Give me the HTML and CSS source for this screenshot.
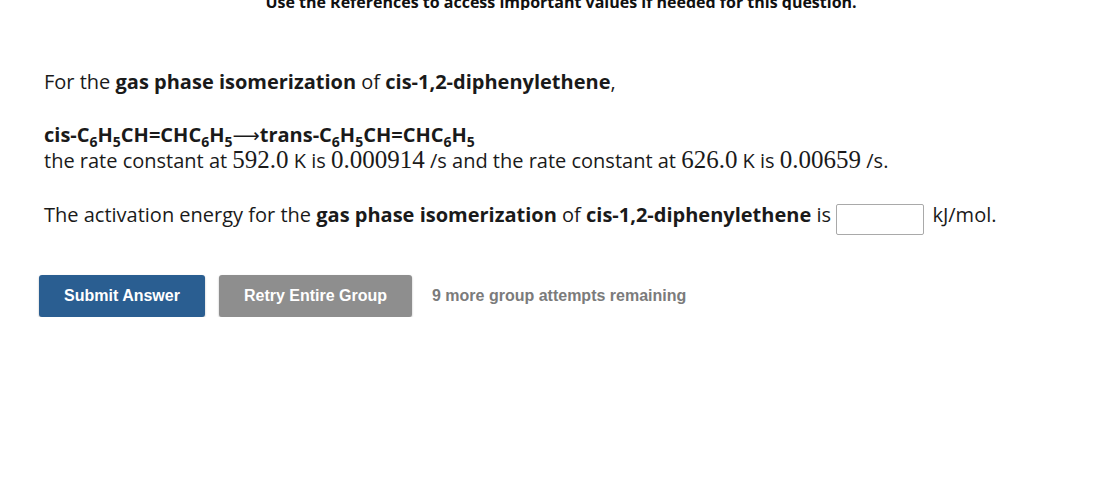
FILE: index.html
```html
<!DOCTYPE html>
<html>
<head>
<meta charset="utf-8">
<link rel="stylesheet" href="styles.css">
</head>
<body>
<div class="refs">Use the References to access important values if needed for this question.</div>
<div class="question">
  <p class="intro">For the <b>gas phase isomerization</b> of <b>cis-1,2-diphenylethene</b>,</p>
  <p class="data">
    <b>cis-C<sub>6</sub>H<sub>5</sub>CH=CHC<sub>6</sub>H<sub>5</sub></b><span class="arrow">⟶</span><b>trans-C<sub>6</sub>H<sub>5</sub>CH=CHC<sub>6</sub>H<sub>5</sub></b><br>
    the rate constant at <span class="num">592.0</span> K is <span class="num">0.000914</span> /s and the rate constant at <span class="num">626.0</span> K is <span class="num">0.00659</span> /s.
  </p>
  <p class="ask">The activation energy for the <b>gas phase isomerization</b> of <b>cis-1,2-diphenylethene</b> is <input class="answer" type="text"> kJ/mol.</p>
  <div class="actions">
    <button class="btn submit">Submit Answer</button>
    <button class="btn retry">Retry Entire Group</button>
    <span class="remaining">9 more group attempts remaining</span>
  </div>
</div>
</body>
</html>
```
FILE: styles.css
```css
html, body {
  margin: 0;
  padding: 0;
  background: #fff;
}
body {
  font-family: "Open Sans", "DejaVu Sans", sans-serif;
  color: #1a1a1a;
}
.refs {
  margin-top: -6px;
  height: 16px;
  overflow: hidden;
  padding-left: 16px;
  text-align: center;
  font-weight: 700;
  font-size: 16px;
  line-height: 16px;
  color: #111;
}
.question {
  padding-left: 44px;
  font-size: 20px;
  line-height: 26px;
}
.question p {
  margin: 0;
}
.intro {
  margin-top: 59px !important;
}
.data {
  margin-top: 27px !important;
}
sub {
  font-size: 14px;
  line-height: 0;
  vertical-align: -5px;
}
.arrow {
  font-family: "DejaVu Sans", sans-serif;
  font-size: 19px;
  font-weight: 400;
}
.num {
  font-family: "Liberation Serif", "DejaVu Serif", serif;
  font-size: 25px;
  line-height: 0;
}
.ask {
  margin-top: 28px !important;
}
.answer {
  box-sizing: border-box;
  width: 88px;
  height: 31px;
  border: 1px solid #a9a9a9;
  border-radius: 2px;
  padding: 2px;
  margin: 0 3px 0 0;
  vertical-align: -2px;
  font-size: 16px;
}
.actions {
  display: flex;
  align-items: center;
  gap: 14px;
  margin-top: 40px;
  margin-left: -5px;
}
.btn {
  font-family: "Liberation Sans", Arial, sans-serif;
  font-weight: 700;
  font-size: 16px;
  color: #fff;
  border: none;
  border-radius: 3px;
  height: 42px;
  padding: 0;
  box-shadow: 0 1px 2px rgba(0,0,0,0.3);
}
.submit {
  background: #2a5e91;
  width: 166px;
}
.retry {
  background: #8e8e8e;
  width: 193px;
}
.remaining {
  font-family: "Liberation Sans", Arial, sans-serif;
  font-weight: 700;
  font-size: 16px;
  color: #7b7b7b;
  margin-left: 6px;
}
```
